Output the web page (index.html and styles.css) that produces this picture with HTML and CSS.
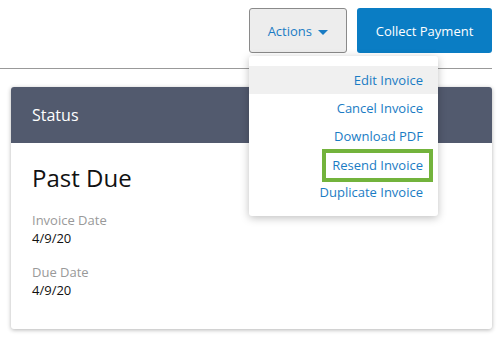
FILE: index.html
```html
<!DOCTYPE html>
<html>
<head>
<meta charset="utf-8">
<link rel="stylesheet" href="styles.css">
</head>
<body>
<div class="page">
  <div class="toolbar">
    <div class="actions-wrap">
      <button class="btn btn-actions">Actions <span class="caret"></span></button>
      <ul class="menu">
        <li class="item active">Edit Invoice</li>
        <li class="item">Cancel Invoice</li>
        <li class="item">Download PDF</li>
        <li class="item"><span class="highlight">Resend Invoice</span></li>
        <li class="item">Duplicate Invoice</li>
      </ul>
    </div>
    <button class="btn btn-primary">Collect Payment</button>
  </div>
  <hr class="divider">
  <div class="card">
    <div class="card-header">Status</div>
    <div class="card-body">
      <div class="status">Past Due</div>
      <div class="field">
        <div class="label">Invoice Date</div>
        <div class="value">4/9/20</div>
      </div>
      <div class="field">
        <div class="label">Due Date</div>
        <div class="value">4/9/20</div>
      </div>
    </div>
  </div>
</div>
</body>
</html>
```
FILE: styles.css
```css
* { box-sizing: border-box; }
html, body { margin: 0; padding: 0; background: #fff; }
body { font-family: "Open Sans", "Liberation Sans", sans-serif; }
.page { width: 502px; height: 341px; position: relative; overflow: hidden; }
.toolbar {
  display: flex;
  justify-content: flex-end;
  gap: 10px;
  padding: 8px 10px 0 0;
}
.actions-wrap { position: relative; }
.btn {
  font-family: "Open Sans", "Liberation Sans", sans-serif;
  font-size: 13px;
  height: 45px;
  border-radius: 3px;
  cursor: pointer;
  margin: 0;
}
.btn-actions {
  width: 98px;
  background: #ededed;
  border: 1px solid #8a8a8a;
  color: #1a7cc4;
  padding: 0;
}
.caret {
  display: inline-block;
  width: 0; height: 0;
  border-left: 5px solid transparent;
  border-right: 5px solid transparent;
  border-top: 5px solid #1a7cc4;
  vertical-align: middle;
  margin-left: 3px;
}
.btn-primary {
  width: 135px;
  background: #0a7dc4;
  border: none;
  color: #fff;
}
.menu {
  position: absolute;
  left: 0;
  top: 48px;
  width: 189px;
  margin: 0;
  padding: 10px 0;
  list-style: none;
  background: #fff;
  border-radius: 3px;
  box-shadow: 0 2px 8px rgba(0,0,0,0.25);
  z-index: 2;
}
.item {
  height: 28px;
  line-height: 28px;
  text-align: right;
  padding-right: 15px;
  font-size: 13px;
  color: #1a7cc4;
}
.item.active { background: #f0f0f0; }
.highlight {
  display: inline-block;
  border: 4px solid #73b33c;
  height: 33px;
  line-height: 25px;
  padding: 0 6px 0 6px;
  margin-right: -10px;
  vertical-align: top;
  margin-top: -1px;
}
.divider {
  margin: 15px 10px 0 0;
  border: none;
  border-top: 1px solid #999;
  height: 0;
}
.card {
  margin: 18px 10px 0 11px;
  border-radius: 3px;
  box-shadow: 0 1px 4px rgba(0,0,0,0.3);
  overflow: hidden;
  background: #fff;
}
.card-header {
  background: #525a6e;
  color: #fff;
  height: 56px;
  line-height: 56px;
  padding-left: 21px;
  font-size: 16px;
}
.card-body { padding: 18px 21px 29px; }
.status { font-size: 24px; color: #111; line-height: 34px; margin-bottom: 16px; }
.field { margin-bottom: 15px; }
.field:last-child { margin-bottom: 0; }
.label { font-size: 13px; color: #999; line-height: 18px; }
.value { font-size: 13px; color: #111; line-height: 19px; }
```
